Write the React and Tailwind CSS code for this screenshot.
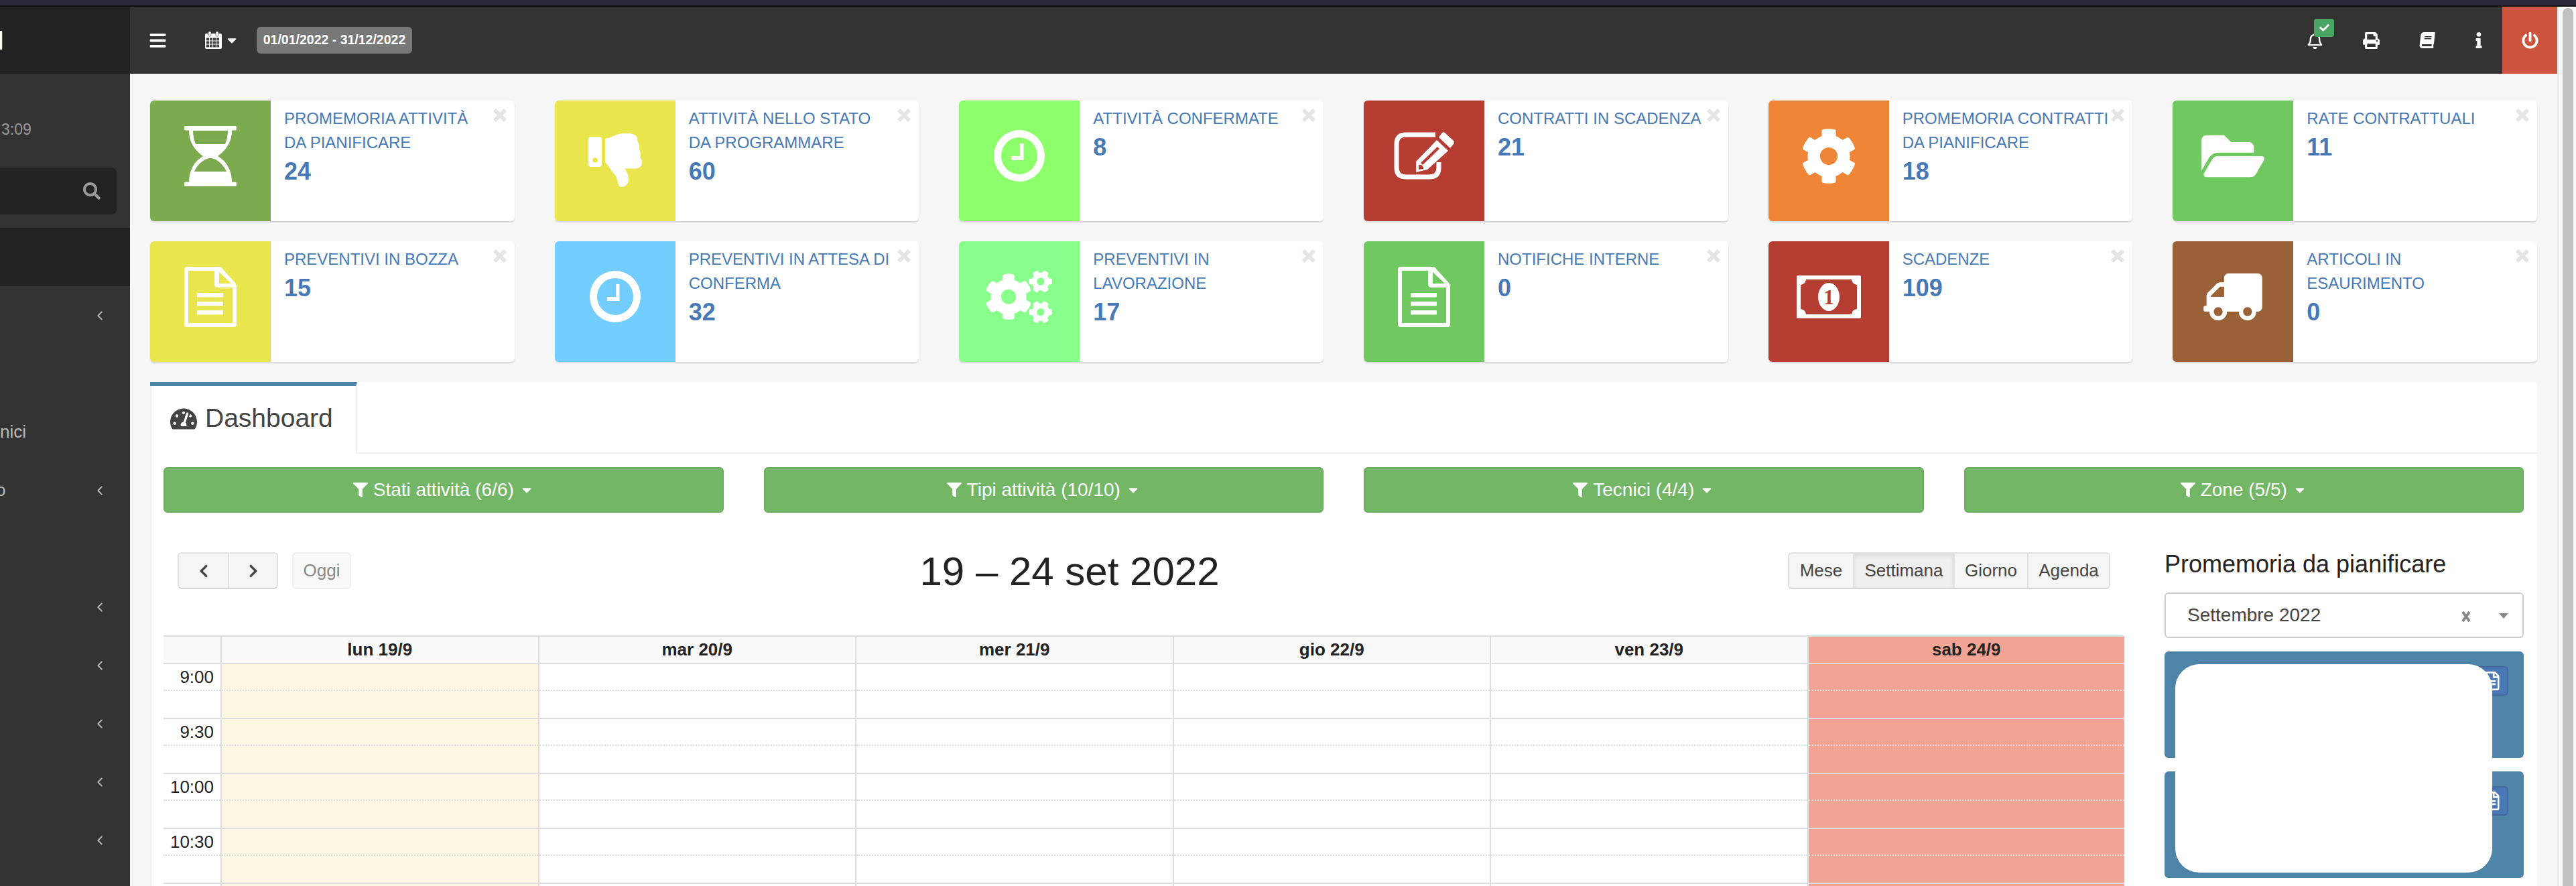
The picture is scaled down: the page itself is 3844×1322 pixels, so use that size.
import React from "react";
import { ChevronLeft } from "lucide-react";
import {
  FaBars,
  FaBook,
  FaCaretDown,
  FaCheck,
  FaChevronLeft,
  FaChevronRight,
  FaCog,
  FaCogs,
  FaFilter,
  FaFolderOpen,
  FaInfo,
  FaPowerOff,
  FaPrint,
  FaRegBell,
  FaRegFileAlt,
  FaSearch,
  FaTachometerAlt,
  FaThumbsDown,
  FaTruck,
} from "react-icons/fa";

const Hourglass = () => (
  <svg viewBox="0 0 78 90" className="w-[78px] h-[90px]" fill="white">
    <rect x="0" y="0" width="78" height="6.5" rx="2" />
    <rect x="0" y="83.5" width="78" height="6.5" rx="2" />
    <path
      fillRule="evenodd"
      d="M7 6C7 25 16 36 28 45C16 52 7 65 7 84H71C71 65 62 52 50 45C62 36 71 25 71 6ZM13 7H65C65 15 63 22 61 27H17C15 22 13 15 13 7ZM39 48C30 48 19 58 15 68H63C59 58 48 48 39 48Z"
    />
  </svg>
);

const FileIcon = () => (
  <svg viewBox="0 0 78 90" className="w-[78px] h-[90px]" fill="white">
    <path
      fillRule="evenodd"
      d="M4 0H52C54 0 56 1 57 3L76 24C77 26 78 27 78 30V86Q78 90 74 90H4Q0 90 0 86V4Q0 0 4 0ZM6 6V84H72V31H50Q45 31 45 26V6ZM52 8V25H70Z"
    />
    <rect x="19" y="39" width="39" height="6.5" rx="1" />
    <rect x="19" y="52" width="39" height="6.5" rx="1" />
    <rect x="19" y="65" width="39" height="6.5" rx="1" />
  </svg>
);

const ClockIcon = () => (
  <svg viewBox="0 0 76 77" className="w-[76px] h-[77px]" fill="white">
    <path
      fillRule="evenodd"
      d="M38 0A38 38.5 0 1 0 38 77A38 38.5 0 1 0 38 0ZM38 11A27 27.5 0 1 1 38 66A27 27.5 0 1 1 38 11Z"
    />
    <path d="M39 20H44.5V45H26V39H39Z" />
  </svg>
);

const EditIcon = () => (
  <svg viewBox="0 0 90 71" className="w-[90px] h-[71px]" fill="white">
    <path
      d="M62 4H18Q4 4 4 18V53Q4 67 18 67H53Q67 67 67 53V45"
      fill="none"
      stroke="white"
      strokeWidth="7"
    />
    <path d="M72 1Q75 -1 77 2L89 13Q91 15 89 18L84 24L67 8Z" />
    <path d="M64 12L81 28L50 56L33 60L33 44Z" />
    <path d="M40 46L65 22L68 25L43 49Z" fill="#b63d32" />
    <path d="M37 49L41 49L44 52L44 55L37 56Z" fill="#b63d32" />
  </svg>
);

const MoneyIcon = () => (
  <svg viewBox="0 0 96 64" className="w-[96px] h-[64px]" fill="white">
    <rect width="96" height="64" rx="2" />
    <path
      d="M14 6H82C83 11 85 13 90 14V50C85 51 83 53 82 58H14C13 53 11 51 6 50V14C11 13 13 11 14 6Z"
      fill="#b63d32"
    />
    <ellipse cx="48" cy="32" rx="16" ry="21" />
    <text
      x="48"
      y="43"
      textAnchor="middle"
      fill="#b63d32"
      fontSize="32"
      fontWeight="700"
      fontFamily="Liberation Serif, serif"
    >
      1
    </text>
  </svg>
);

const CalendarIcon = () => (
  <svg viewBox="0 0 25 26" className="w-[25px] h-[26px]">
    <rect x="0" y="3" width="25" height="23" rx="2" fill="white" />
    <rect x="5" y="0" width="4" height="7" rx="1.5" fill="white" stroke="#333" strokeWidth="0.6" />
    <rect x="16" y="0" width="4" height="7" rx="1.5" fill="white" stroke="#333" strokeWidth="0.6" />
    {[9.5, 14.5, 19.5].map((y) =>
      [2, 7, 12, 17].map((x) => (
        <rect key={`${x}-${y}`} x={x} y={y} width="4" height="4" fill="#444" />
      ))
    )}
  </svg>
);

const cards = [
  { title: "PROMEMORIA ATTIVITÀ DA PIANIFICARE", count: 24, bg: "bg-[#7cab4f]", icon: <Hourglass /> },
  { title: "ATTIVITÀ NELLO STATO DA PROGRAMMARE", count: 60, bg: "bg-[#e9e64d]", icon: <FaThumbsDown className="w-[80px] h-[80px] mt-[13px]" color="white" /> },
  { title: "ATTIVITÀ CONFERMATE", count: 8, bg: "bg-[#8dff6a]", icon: <ClockIcon /> },
  { title: "CONTRATTI IN SCADENZA", count: 21, bg: "bg-[#b63d32]", icon: <EditIcon /> },
  { title: "PROMEMORIA CONTRATTI DA PIANIFICARE", count: 18, bg: "bg-[#ef8536]", icon: <FaCog className="w-[84px] h-[84px]" color="white" /> },
  { title: "RATE CONTRATTUALI", count: 11, bg: "bg-[#70c960]", icon: <FaFolderOpen className="w-[94px] h-[84px]" color="white" /> },
  { title: "PREVENTIVI IN BOZZA", count: 15, bg: "bg-[#e9e64d]", icon: <FileIcon /> },
  { title: "PREVENTIVI IN ATTESA DI CONFERMA", count: 32, bg: "bg-[#74cdff]", icon: <ClockIcon /> },
  { title: "PREVENTIVI IN LAVORAZIONE", count: 17, bg: "bg-[#88ff8a]", icon: <FaCogs className="w-[98px] h-[88px]" color="white" /> },
  { title: "NOTIFICHE INTERNE", count: 0, bg: "bg-[#70c960]", icon: <FileIcon /> },
  { title: "SCADENZE", count: 109, bg: "bg-[#b63d32]", icon: <MoneyIcon /> },
  { title: "ARTICOLI IN ESAURIMENTO", count: 0, bg: "bg-[#9a6139]", icon: <FaTruck className="w-[88px] h-[70px] -scale-x-100" color="white" /> },
];

const navRows = [
  { chevron: true },
  {},
  { text: "nici" },
  { text: "o", chevron: true, cut: true },
  {},
  { chevron: true },
  { chevron: true },
  { chevron: true },
  { chevron: true },
  { chevron: true },
];

const filters = ["Stati attività (6/6)", "Tipi attività (10/10)", "Tecnici (4/4)", "Zone (5/5)"];
const days = ["lun 19/9", "mar 20/9", "mer 21/9", "gio 22/9", "ven 23/9", "sab 24/9"];
const times = ["9:00", "9:30", "10:00", "10:30", ""];

const dayBg = (i) => {
  if (i === 0) return "bg-[#fcf6e3]";
  if (i === 5) return "bg-[#f2a595]";
  return "bg-white";
};

const Sidebar = () => (
  <div className="w-[194px] shrink-0 bg-[#333] text-[#bbb]">
    <div className="h-[100px] bg-[#222] flex items-center">
      <div className="w-[6px] overflow-hidden">
        <div className="ml-[-27px] text-[40px] leading-none text-white">M</div>
      </div>
    </div>
    <div className="h-[140px] pt-[68px] pl-[2px] text-[23px] leading-[30px] text-[#999]">3:09</div>
    <div className="h-[70px] w-[174px] bg-[#222] rounded-r-lg flex items-center justify-end pr-[24px]">
      <FaSearch className="w-[26px] h-[26px] text-[#999]" />
    </div>
    <div className="h-[87px] mt-[20px] bg-[#222]" />
    {navRows.map((row, i) => (
      <div key={i} className="h-[87px] flex items-center justify-between pr-[34px] text-[26px] overflow-hidden">
        <span className={row.cut ? "ml-[-6px]" : ""}>{row.text}</span>
        {row.chevron && <ChevronLeft className="w-[22px] h-[22px]" strokeWidth={2} />}
      </div>
    ))}
  </div>
);

const Header = () => (
  <div className="h-[100px] bg-[#333] flex items-center text-white shrink-0">
    <FaBars className="ml-[29px] w-[25px] h-[27px]" />
    <div className="ml-[58px]">
      <CalendarIcon />
    </div>
    <FaCaretDown className="ml-[4px] w-[22px] h-[22px]" />
    <div className="ml-[26px] w-[232px] h-[40px] bg-[#777] rounded-md flex items-center justify-center text-[19.5px] font-bold">
      01/01/2022 - 31/12/2022
    </div>
    <div className="ml-auto flex h-full items-center">
      <div className="relative w-[84px] flex justify-center">
        <FaRegBell className="w-[25px] h-[25px]" />
        <div className="absolute left-[41px] top-[-20px] w-[30px] h-[27px] bg-[#4aa564] rounded flex items-center justify-center">
          <FaCheck className="w-[15px] h-[15px]" />
        </div>
      </div>
      <div className="w-[84px] flex justify-center">
        <FaPrint className="w-[25px] h-[25px]" />
      </div>
      <div className="w-[84px] flex justify-center">
        <FaBook className="w-[24px] h-[24px] -skew-x-6" />
      </div>
      <div className="w-[70px] flex justify-center">
        <FaInfo className="w-[24px] h-[24px]" />
      </div>
      <div className="w-[82px] h-full bg-[#cd5540] flex items-center justify-center">
        <FaPowerOff className="w-[25px] h-[25px]" />
      </div>
    </div>
  </div>
);

const Card = ({ card }) => (
  <div className="relative flex h-[180px] bg-white rounded-md overflow-hidden shadow-[0_2px_2px_rgba(0,0,0,0.12)]">
    <div className={`${card.bg} w-[180px] shrink-0 flex items-center justify-center pb-[15px]`}>
      {card.icon}
    </div>
    <div className="pl-[20px] pr-[35px] pt-[9px] text-[#4679b5]">
      <div className="text-[24px] leading-[36px]">{card.title}</div>
      <div className="text-[36px] leading-[50px] font-bold">{card.count}</div>
    </div>
    <svg viewBox="0 0 22 22" className="absolute right-[11px] top-[11px] w-[22px] h-[22px]">
      <path d="M3 3L19 19M19 3L3 19" stroke="#e5e5e5" strokeWidth="6" />
    </svg>
  </div>
);

const BlueReminder = () => (
  <div className="h-[159px] bg-[#4f84a9] rounded-md flex justify-end pr-[23px] pt-[22px]">
    <div className="w-[48px] h-[44px] bg-[#4a78b5] border-2 border-[#44699f] rounded-md flex items-center justify-center">
      <FaRegFileAlt className="w-[22px] h-[28px] text-white" />
    </div>
  </div>
);

const Calendar = () => (
  <div className="flex-1 min-w-0">
    <div className="flex items-center justify-between h-[55px] px-[21px] relative">
      <div className="flex gap-[21px]">
        <div className="flex w-[150px] h-[55px] bg-[#f5f5f5] border-2 border-[#e0e0e0] border-b-[#d5d5d5] rounded-md text-[#444]">
          <div className="w-[75px] border-r-2 border-[#e0e0e0] flex items-center justify-center">
            <FaChevronLeft className="w-[18px] h-[22px]" />
          </div>
          <div className="flex-1 flex items-center justify-center">
            <FaChevronRight className="w-[18px] h-[22px]" />
          </div>
        </div>
        <div className="w-[88px] h-[55px] bg-[#f9f9f9] border-2 border-[#eee] rounded-md flex items-center justify-center text-[26px] text-[#888]">
          Oggi
        </div>
      </div>
      <div className="text-[60px] leading-none text-[#222] translate-y-[1px]">19 – 24 set 2022</div>
      <div className="flex w-[481px] h-[55px] bg-[#f5f5f5] border-2 border-[#e0e0e0] border-b-[#d5d5d5] rounded-md text-[26px] text-[#444]">
        <div className="w-[95px] flex items-center justify-center">Mese</div>
        <div className="w-[152px] flex items-center justify-center border-x-2 border-[#e0e0e0] bg-[#efefef] shadow-[inset_0_4px_6px_rgba(0,0,0,0.08)]">
          Settimana
        </div>
        <div className="w-[110px] flex items-center justify-center border-r-2 border-[#e0e0e0]">Giorno</div>
        <div className="flex-1 flex items-center justify-center">Agenda</div>
      </div>
    </div>
    <div className="mt-[69px]">
      <div className="grid grid-cols-[85px_repeat(6,1fr)] h-[41px] border-t-2 border-[#ddd] text-[26px] font-bold text-[#222] bg-[#f9f9f9]">
        <div />
        {days.map((day, i) => (
          <div
            key={day}
            className={`border-l-2 border-[#ddd] text-center leading-[38px] ${i === 5 ? "bg-[#f2a595]" : ""}`}
          >
            {day}
          </div>
        ))}
      </div>
      {times.map((time, r) => (
        <div key={r} className="grid grid-cols-[85px_repeat(6,1fr)] h-[82px] border-t-2 border-[#ddd] text-[26px] text-[#222]">
          <div className="h-[40px] border-b-2 border-dotted border-[#ddd] text-right pr-[10px] leading-[38px]">{time}</div>
          {days.map((day, i) => (
            <div key={day} className={`${dayBg(i)} border-l-2 border-[#ddd]`}>
              <div className="h-[40px] border-b-2 border-dotted border-[#ddd]" />
            </div>
          ))}
        </div>
      ))}
    </div>
  </div>
);

const Reminders = () => (
  <div className="relative w-[536px] shrink-0">
    <div className="text-[36px] leading-[36px] text-[#222] whitespace-nowrap">Promemoria da pianificare</div>
    <div className="relative mt-[24px] h-[68px] border-2 border-[#ccc] rounded-md flex items-center pl-[32px] text-[28px] text-[#444]">
      Settembre 2022
      <svg viewBox="0 0 18 18" className="absolute left-[439px] top-[25px] w-[18px] h-[18px]">
        <path d="M4 2L14 16M14 2L4 16" stroke="#888" strokeWidth="4" />
      </svg>
      <svg viewBox="0 0 14 8" className="absolute left-[497px] top-[29px] w-[14px] h-[8px]">
        <path d="M0 0H14L7 8Z" fill="#888" />
      </svg>
    </div>
    <div className="mt-[20px] flex flex-col gap-[20px]">
      <BlueReminder />
      <BlueReminder />
    </div>
    <div className="absolute left-[16px] top-[167px] w-[473px] h-[311px] bg-white rounded-[36px]" />
  </div>
);

const App = () => {
  return (
    <div className="w-[3844px] h-[1322px] overflow-hidden flex flex-col font-['Liberation_Sans',Arial,sans-serif]">
      <div className="h-[10px] shrink-0 bg-[#2a2a38] border-b-2 border-[#111]" />
      <div className="flex flex-1 min-h-0">
        <Sidebar />
        <div className="flex-1 min-w-0 flex flex-col bg-[#f6f6f6]">
          <Header />
          <div className="px-[30px] pt-[40px]">
            <div className="grid grid-cols-6 gap-x-[60px] gap-y-[30px]">
              {cards.map((card) => (
                <Card key={card.title} card={card} />
              ))}
            </div>
            <div className="mt-[30px] bg-white shadow-[inset_2px_0_0_#f0f0f0]">
              <div className="flex h-[107px]">
                <div className="w-[309px] h-full border-t-[6px] border-[#4f84a9] border-r-2 border-r-[#f0f0f0] flex items-center pl-[30px] pb-[4px] gap-[12px] text-[39px] text-[#444]">
                  <FaTachometerAlt className="w-[40px] h-[36px]" />
                  Dashboard
                </div>
                <div className="flex-1 border-b-2 border-[#f0f0f0]" />
              </div>
              <div className="px-[20px] pt-[20px]">
                <div className="grid grid-cols-4 gap-x-[60px]">
                  {filters.map((label) => (
                    <div
                      key={label}
                      className="h-[68px] bg-[#72b666] border-2 border-[#6aae5e] rounded-md flex items-center justify-center gap-[8px] text-white text-[28px]"
                    >
                      <FaFilter className="w-[22px] h-[22px]" />
                      {label}
                      <FaCaretDown className="w-[22px] h-[22px]" />
                    </div>
                  ))}
                </div>
                <div className="mt-[59px] flex gap-[60px]">
                  <Calendar />
                  <Reminders />
                </div>
              </div>
            </div>
          </div>
        </div>
        <div className="w-[28px] shrink-0 bg-[#f9f9f9] border-l-2 border-[#e8e8e8] pl-[6px] pt-[2px]">
          <div className="w-[16px] h-full bg-[#c1c1c1] rounded-t-lg" />
        </div>
      </div>
    </div>
  );
};

export default App;
